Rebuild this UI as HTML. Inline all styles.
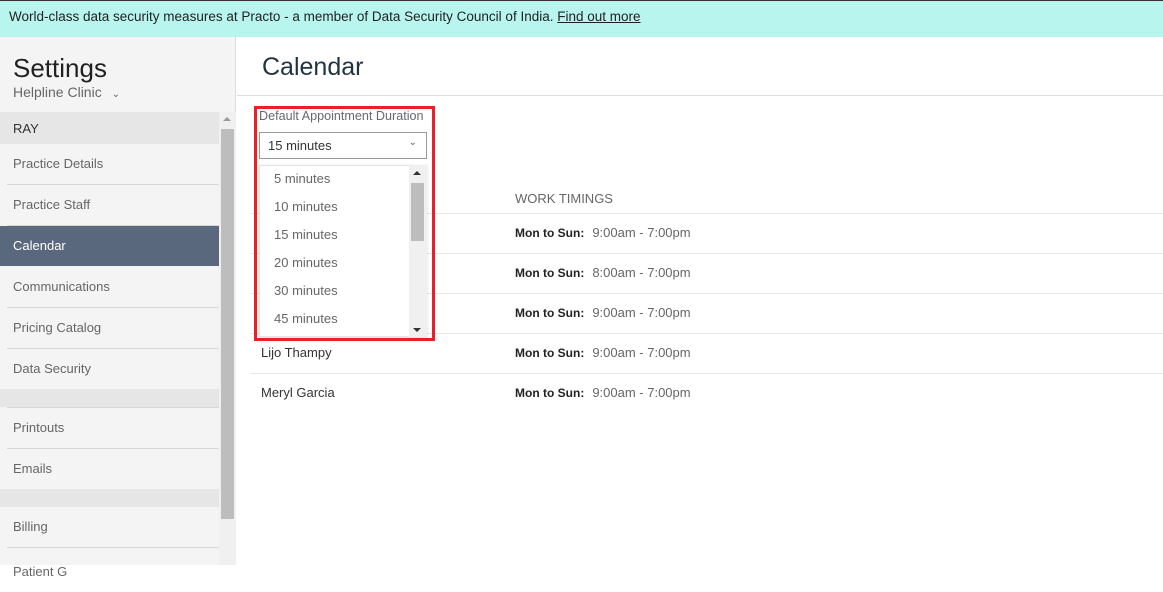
<!DOCTYPE html>
<html><head><style>
*{margin:0;padding:0;box-sizing:border-box}
body{width:1163px;height:565px;overflow:hidden;font-family:"Liberation Sans",sans-serif;background:#fff;position:relative;color:#333}
.a{position:absolute}
.banner{left:0;top:0;width:1163px;height:37px;background:#b8f5ef;font-size:13.5px;color:#222;padding:8px 9px;border-top:1px solid #333}
.side{left:0;top:37px;width:236px;height:528px;background:#f4f4f4;border-right:1px solid #ddd}
.item{position:absolute;left:0;width:219px;font-size:13px;color:#666;padding-left:13px;line-height:40px}
.line{position:absolute;left:7px;width:212px;height:1px;background:#d6d6d6}
.gap{position:absolute;left:0;width:219px;background:#e6e6e6}
.row{position:absolute;left:251px;width:912px;height:1px;background:#e6e6e6}
.t{position:absolute;font-size:13px;color:#333}
.b{font-weight:bold;font-size:12px;color:#222}
.tm{color:#666;margin-left:8px}
.opt{position:absolute;left:274px;font-size:13px;color:#666}
</style></head><body>
<div class="a banner">World-class data security measures at Practo - a member of Data Security Council of India. <u>Find out more</u></div>
<div class="a side"></div>
<div class="a" style="left:13px;top:53px;font-size:26px;color:#222">Settings</div>
<div class="a" style="left:13px;top:84px;font-size:14px;color:#666">Helpline Clinic <span style="font-size:10px;margin-left:6px">&#8964;</span></div>
<div class="gap" style="top:112px;height:32px"></div>
<div class="item" style="top:113px;line-height:32px;color:#333">RAY</div>
<div class="item" style="top:144px">Practice Details</div><div class="line" style="top:184px"></div>
<div class="item" style="top:185px">Practice Staff</div><div class="line" style="top:225px"></div>
<div class="item" style="top:226px;background:#5a687e;color:#fff;height:40px">Calendar</div>
<div class="item" style="top:267px">Communications</div><div class="line" style="top:307px"></div>
<div class="item" style="top:308px">Pricing Catalog</div><div class="line" style="top:348px"></div>
<div class="item" style="top:349px">Data Security</div>
<div class="gap" style="top:389px;height:18px"></div><div class="line" style="top:407px"></div>
<div class="item" style="top:408px">Printouts</div><div class="line" style="top:448px"></div>
<div class="item" style="top:449px">Emails</div>
<div class="gap" style="top:489px;height:18px"></div>
<div class="item" style="top:507px">Billing</div><div class="line" style="top:547px"></div>
<div class="item" style="top:552px">Patient G</div>
<div class="a" style="left:219px;top:112px;width:17px;height:453px;background:#f0f0f0"></div>
<div class="a" style="left:221px;top:129px;width:13px;height:390px;background:#bdbdbd"></div>
<div class="a" style="left:223px;top:117px;width:0;height:0;border:4px solid transparent;border-bottom:4px solid #999;border-top:0"></div>

<div class="a" style="left:262px;top:53px;font-size:25px;color:#1f3340">Calendar</div>
<div class="a" style="left:237px;top:95px;width:926px;height:1px;background:#ddd"></div>
<div class="a" style="left:515px;top:191px;font-size:13px;color:#666">WORK TIMINGS</div>
<div class="row" style="top:213px"></div><div class="row" style="top:253px"></div><div class="row" style="top:293px"></div><div class="row" style="top:333px"></div><div class="row" style="top:373px"></div>
<div class="t" style="left:515px;top:225px"><span class="b">Mon to Sun:</span><span class="tm">9:00am - 7:00pm</span></div>
<div class="t" style="left:515px;top:265px"><span class="b">Mon to Sun:</span><span class="tm">8:00am - 7:00pm</span></div>
<div class="t" style="left:515px;top:305px"><span class="b">Mon to Sun:</span><span class="tm">9:00am - 7:00pm</span></div>
<div class="t" style="left:515px;top:345px"><span class="b">Mon to Sun:</span><span class="tm">9:00am - 7:00pm</span></div>
<div class="t" style="left:515px;top:385px"><span class="b">Mon to Sun:</span><span class="tm">9:00am - 7:00pm</span></div>
<div class="t" style="left:261px;top:345px">Lijo Thampy</div>
<div class="t" style="left:261px;top:385px">Meryl Garcia</div>

<div class="a" style="left:259px;top:109px;font-size:12.6px;color:#667">Default Appointment Duration</div>
<div class="a" style="left:259px;top:132px;width:168px;height:27px;border:1px solid #999;background:#fff;font-size:13px;color:#333;padding:5px 8px">15 minutes<span style="position:absolute;right:9px;top:4px;font-size:10px;color:#666">&#8964;</span></div>
<div class="a" style="left:259px;top:165px;width:168px;height:172px;background:#fff;border:1px solid #e4e4e4;box-shadow:0 1px 3px rgba(0,0,0,.15)"></div>
<div class="a" style="left:409px;top:165px;width:18px;height:172px;background:#f0f0f0"></div>
<div class="a" style="left:411px;top:183px;width:13px;height:58px;background:#bdbdbd"></div>
<div class="a" style="left:413px;top:171px;border:4px solid transparent;border-bottom:4px solid #333;border-top:0;width:0;height:0"></div>
<div class="a" style="left:413px;top:328px;border:4px solid transparent;border-top:4px solid #333;border-bottom:0;width:0;height:0"></div>
<div class="opt" style="top:171px">5 minutes</div>
<div class="opt" style="top:199px">10 minutes</div>
<div class="opt" style="top:227px">15 minutes</div>
<div class="opt" style="top:255px">20 minutes</div>
<div class="opt" style="top:283px">30 minutes</div>
<div class="opt" style="top:311px">45 minutes</div>
<div class="a" style="left:254px;top:106px;width:181px;height:235px;border:3px solid #e8202a"></div>
</body></html>
